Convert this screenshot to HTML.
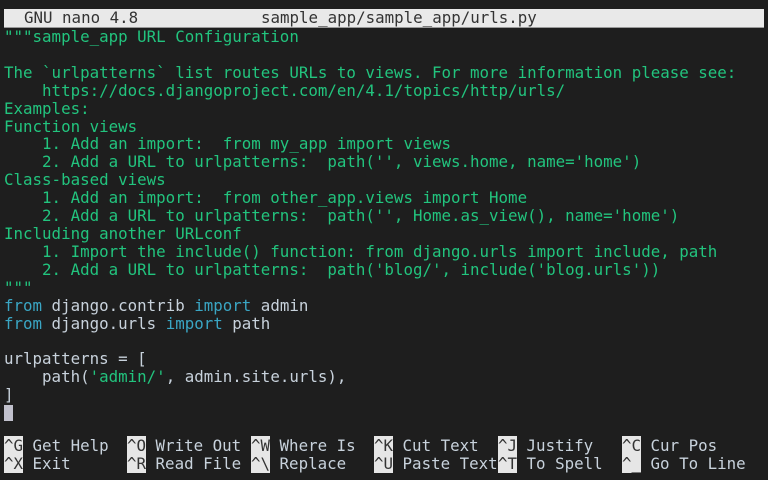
<!DOCTYPE html>
<html><head><meta charset="utf-8"><style>
html,body{margin:0;padding:0;width:768px;height:480px;overflow:hidden;background:#1e1e1e}
.t{position:absolute;left:4px;top:9px;width:760px;height:18px;background:#e9e9e9;border-bottom:1px solid #999}
.t span{position:absolute;top:0;font:15.8px/18px "DejaVu Sans Mono","Liberation Mono",monospace;color:#333;white-space:pre}
pre{position:absolute;left:4px;top:28px;margin:0;font:15.8px/17.9px "DejaVu Sans Mono","Liberation Mono",monospace;color:#22c47e;white-space:pre}
.n{color:#c8d2dc}.k{color:#3aa6c4}.g{color:#22c47e}
.cur{display:inline-block;width:9px;height:16px;background:#c0c0cc;vertical-align:-3px}
.s{position:absolute;font:15.8px/18px "DejaVu Sans Mono","Liberation Mono",monospace;color:#c8d2dc;white-space:pre}
.s b{font-weight:normal;background:#e6e6e6;color:#333}
</style></head><body>
<div class="t"><span style="left:20px">GNU nano 4.8</span><span style="left:257px">sample_app/sample_app/urls.py</span></div>
<pre>"""sample_app URL Configuration

The `urlpatterns` list routes URLs to views. For more information please see:
    https://docs.djangoproject.com/en/4.1/topics/http/urls/
Examples:
Function views
    1. Add an import:  from my_app import views
    2. Add a URL to urlpatterns:  path('', views.home, name='home')
Class-based views
    1. Add an import:  from other_app.views import Home
    2. Add a URL to urlpatterns:  path('', Home.as_view(), name='home')
Including another URLconf
    1. Import the include() function: from django.urls import include, path
    2. Add a URL to urlpatterns:  path('blog/', include('blog.urls'))
"""
<span class="k">from</span><span class="n"> django.contrib </span><span class="k">import</span><span class="n"> admin</span>
<span class="k">from</span><span class="n"> django.urls </span><span class="k">import</span><span class="n"> path</span>

<span class="n">urlpatterns = [</span>
<span class="n">    path(</span>'admin/'<span class="n">, admin.site.urls),</span>
<span class="n">]</span>
<span class="cur"></span></pre>
<div class="s" style="left:4px;top:437px"><b>^G</b> Get Help</div>
<div class="s" style="left:4px;top:455px"><b>^X</b> Exit</div>
<div class="s" style="left:127px;top:437px"><b>^O</b> Write Out</div>
<div class="s" style="left:127px;top:455px"><b>^R</b> Read File</div>
<div class="s" style="left:251px;top:437px"><b>^W</b> Where Is</div>
<div class="s" style="left:251px;top:455px"><b>^\</b> Replace</div>
<div class="s" style="left:374px;top:437px"><b>^K</b> Cut Text</div>
<div class="s" style="left:374px;top:455px"><b>^U</b> Paste Text</div>
<div class="s" style="left:498px;top:437px"><b>^J</b> Justify</div>
<div class="s" style="left:498px;top:455px"><b>^T</b> To Spell</div>
<div class="s" style="left:622px;top:437px"><b>^C</b> Cur Pos</div>
<div class="s" style="left:622px;top:455px"><b>^_</b> Go To Line</div>
</body></html>
